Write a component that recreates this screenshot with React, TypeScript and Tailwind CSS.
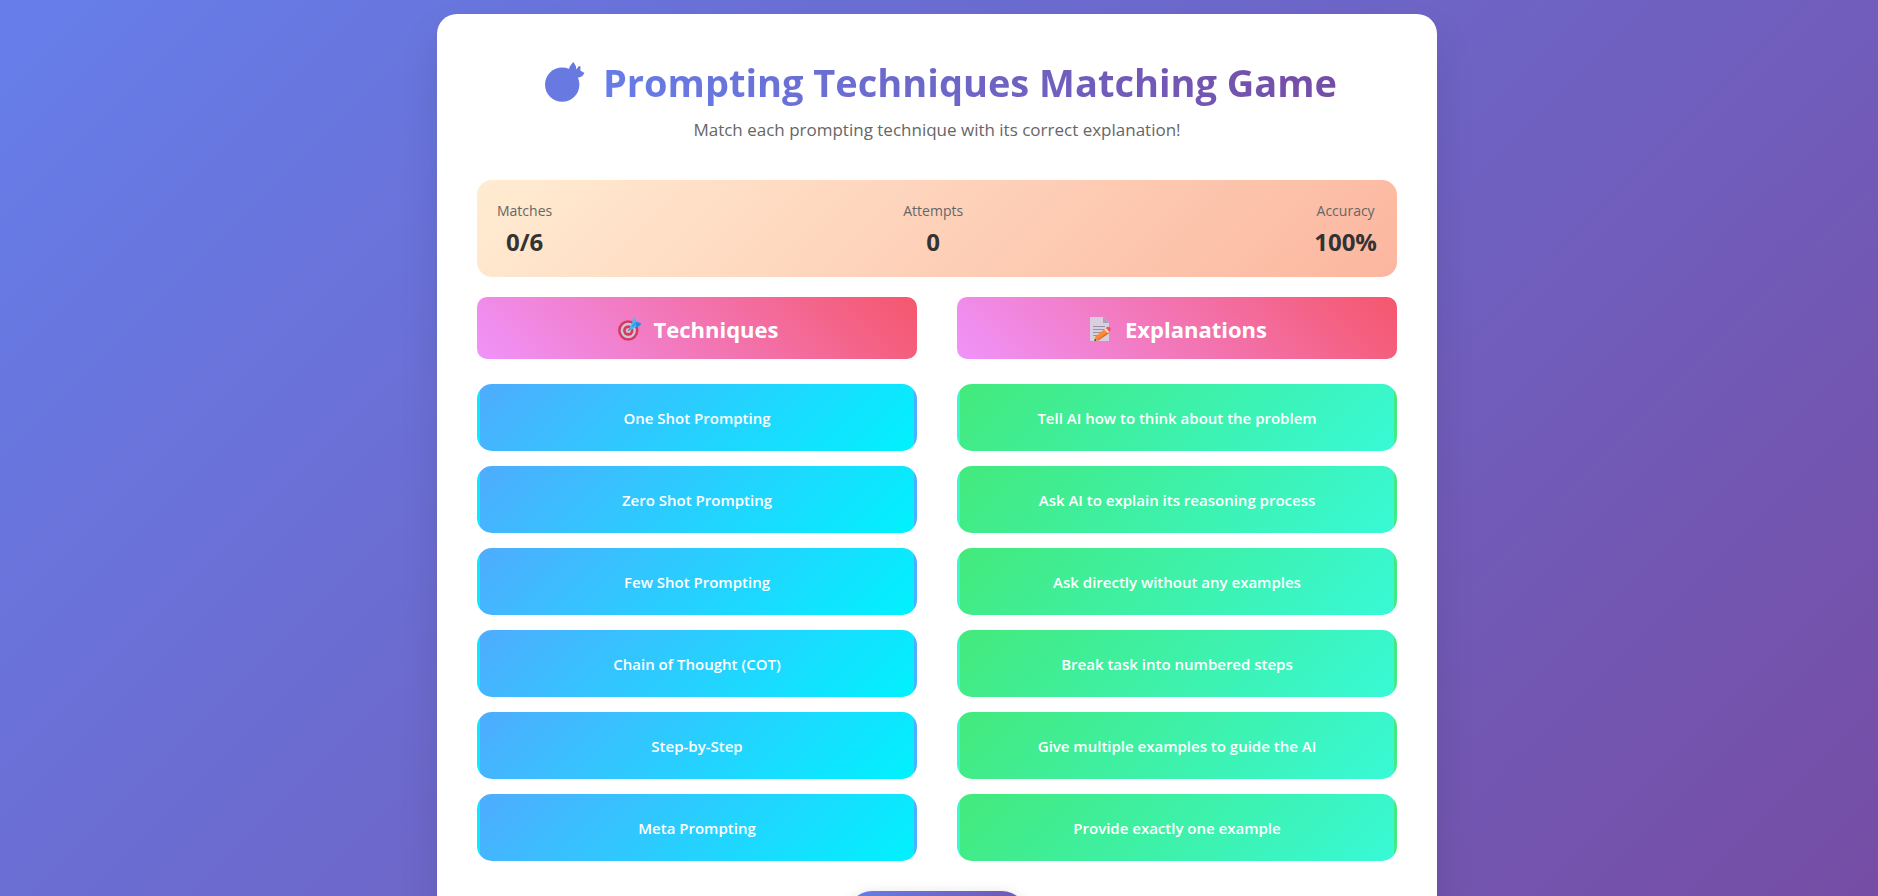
import React, { useState } from 'react';

type Item = { id: number; text: string };

const techniques: Item[] = [
  { id: 1, text: 'One Shot Prompting' },
  { id: 2, text: 'Zero Shot Prompting' },
  { id: 3, text: 'Few Shot Prompting' },
  { id: 4, text: 'Chain of Thought (COT)' },
  { id: 5, text: 'Step-by-Step' },
  { id: 6, text: 'Meta Prompting' },
];

const explanations: Item[] = [
  { id: 6, text: 'Tell AI how to think about the problem' },
  { id: 4, text: 'Ask AI to explain its reasoning process' },
  { id: 2, text: 'Ask directly without any examples' },
  { id: 5, text: 'Break task into numbered steps' },
  { id: 3, text: 'Give multiple examples to guide the AI' },
  { id: 1, text: 'Provide exactly one example' },
];

// Solid silhouette of the target, used next to the title
function TargetSilhouette() {
  return (
    <svg width="40" height="40" viewBox="0 0 40 40" aria-hidden="true">
      <circle cx="17.2" cy="22.6" r="17.2" fill="#6879e2" />
      <path d="M23.500 10 L24.500 5 Q26 2 28.500 0 L31 4.500 L31 7.500 L34 4 L35.500 4.500 L35.300 8.500 L39.500 11 Q38 14 35.500 15 Q32 16.500 29 15 L24 17 Z" fill="#6879e2" />
    </svg>
  );
}

function TargetIcon() {
  return (
    <svg width="24" height="24" viewBox="0 0 24 24" aria-hidden="true">
      <circle cx="10.300" cy="13.500" r="10.200" fill="#d6395f" />
      <circle cx="10.300" cy="13.500" r="7.700" fill="#cfc3d6" />
      <circle cx="10.300" cy="13.500" r="5.200" fill="#dd355c" />
      <circle cx="10.300" cy="13.500" r="2.600" fill="#cbbfd2" />
      <path d="M10.300 13.500 L17 7" stroke="#5d8fb5" strokeWidth="1.500" />
      <path d="M11.500 10.500 L14 6.500 L14.500 3 L16.800 0.500 L18.500 4.800 L23.500 6.500 L21 9.300 L17.500 10 L13.300 13 Z" fill="#4db4f5" />
      <path d="M14 9.800 L18.500 5" stroke="#2a7ad4" strokeWidth="1" />
      <path d="M18.500 4.800 L23.500 6.500 L21 9.300 L17.500 10 Z" fill="#2789e3" />
    </svg>
  );
}

function MemoIcon() {
  return (
    <svg width="24" height="24" viewBox="0 0 24 24" aria-hidden="true">
      <path d="M1 0 H14 L20 6 V24 H1 Z" fill="#d8d0df" />
      <path d="M14 0 L20 6 H14 Z" fill="#aaa0b8" />
      <path d="M4 9.500 H16 M4 12.500 H16 M4 15.500 H13 M4 18.500 H9" stroke="#9a91a8" strokeWidth="1" />
      <path d="M5.300 24 L6.500 19.500 L16.500 11.500 L20 15 L9.500 23 Z" fill="#f98a35" />
      <path d="M8 23.500 L19 15 L20 16.200 L9.500 23.500 Z" fill="#e0661f" />
      <path d="M5.300 24 L6 21.800 L7.500 23.500 Z" fill="#3b2f3a" />
      <path d="M15.300 12.500 L17 11 L20.300 14.700 L18.500 16 Z" fill="#e4dce6" />
      <path d="M17 11 Q19 9 21 10.500 Q23 12.500 20.300 14.700 Z" fill="#f4504f" />
    </svg>
  );
}

function Stat({ label, value }: { label: string; value: string }) {
  return (
    <div className="text-center">
      <div className="mb-1 text-sm leading-[22px] text-[#666]">{label}</div>
      <div className="text-2xl leading-8 font-bold text-[#333]">{value}</div>
    </div>
  );
}

function ColumnTitle({ icon, children }: { icon: React.ReactNode; children: React.ReactNode }) {
  return (
    <h2 className="mb-[25px] flex h-[62px] items-center justify-center gap-3 rounded-[10px] bg-[linear-gradient(45deg,#f093fb,#f5576c)] pt-0.5 pl-0.5 text-[22px] leading-8 font-bold text-white">
      {icon}
      {children}
    </h2>
  );
}

export default function App() {
  const [technique, setTechnique] = useState<number | null>(null);
  const [explanation, setExplanation] = useState<number | null>(null);
  const [matched, setMatched] = useState<number[]>([]);
  const [attempts, setAttempts] = useState(0);

  const check = (t: number | null, e: number | null) => {
    if (t === null || e === null) {
      setTechnique(t);
      setExplanation(e);
      return;
    }
    setAttempts(attempts + 1);
    if (t === e) setMatched([...matched, t]);
    setTechnique(null);
    setExplanation(null);
  };

  const reset = () => {
    setTechnique(null);
    setExplanation(null);
    setMatched([]);
    setAttempts(0);
  };

  const accuracy = attempts === 0 ? 100 : Math.round((matched.length / attempts) * 100);

  const card =
    'min-h-[67px] w-full cursor-pointer rounded-[15px] border-x-[3px] border-transparent px-5 pt-0.5 text-center text-[15px] font-semibold text-white disabled:opacity-50';

  return (
    <div className="min-h-screen bg-[linear-gradient(135deg,#667eea_0%,#764ba2_100%)] pt-[14px] pr-6 pb-5 pl-5 font-['Open_Sans','Noto_Sans',sans-serif]">
      <main className="mx-auto max-w-[1000px] rounded-[20px] bg-white p-10 shadow-[0_20px_40px_rgba(0,0,0,0.1)]">

        {/* Header */}
        <header className="mb-9 text-center">
          <h1 className="flex items-center justify-center gap-[18px] pl-2 text-[38px] leading-[56px] font-bold">
            <TargetSilhouette />
            <span className="bg-[linear-gradient(45deg,#667eea,#764ba2)] bg-clip-text text-transparent">
              Prompting Techniques Matching Game
            </span>
          </h1>
          <p className="mt-1.5 text-[17px] leading-7 text-[#666]">Match each prompting technique with its correct explanation!</p>
        </header>

        {/* Stats */}
        <section className="mb-5 flex h-[97px] items-center justify-between rounded-[15px] bg-[linear-gradient(135deg,#ffecd2,#fcb69f)] px-5">
          <Stat label="Matches" value={`${matched.length}/6`} />
          <Stat label="Attempts" value={`${attempts}`} />
          <Stat label="Accuracy" value={`${accuracy}%`} />
        </section>

        {/* Board */}
        <div className="grid grid-cols-2 gap-10">
          <section>
            <ColumnTitle icon={<TargetIcon />}>Techniques</ColumnTitle>
            <div className="flex flex-col gap-[15px]">
              {techniques.map(item => (
                <button
                  key={item.id}
                  disabled={matched.includes(item.id)}
                  onClick={() => check(item.id, explanation)}
                  className={`${card} bg-[linear-gradient(135deg,#4facfe_0%,#00f2fe_100%)] ${technique === item.id ? 'ring-4 ring-yellow-400' : ''}`}
                >
                  {item.text}
                </button>
              ))}
            </div>
          </section>
          <section>
            <ColumnTitle icon={<MemoIcon />}>Explanations</ColumnTitle>
            <div className="flex flex-col gap-[15px]">
              {explanations.map(item => (
                <button
                  key={item.id}
                  disabled={matched.includes(item.id)}
                  onClick={() => check(technique, item.id)}
                  className={`${card} bg-[linear-gradient(135deg,#43e97b_0%,#38f9d7_100%)] ${explanation === item.id ? 'ring-4 ring-yellow-400' : ''}`}
                >
                  {item.text}
                </button>
              ))}
            </div>
          </section>
        </div>

        <div className="mt-[30px] text-center">
          <button
            onClick={reset}
            className="min-w-[180px] cursor-pointer rounded-[25px] bg-[linear-gradient(135deg,#667eea_0%,#764ba2_100%)] px-[30px] py-[15px] text-base font-semibold text-white shadow-[0_5px_15px_rgba(0,0,0,0.2)]"
          >
            New Game
          </button>
        </div>
      </main>
    </div>
  );
}
